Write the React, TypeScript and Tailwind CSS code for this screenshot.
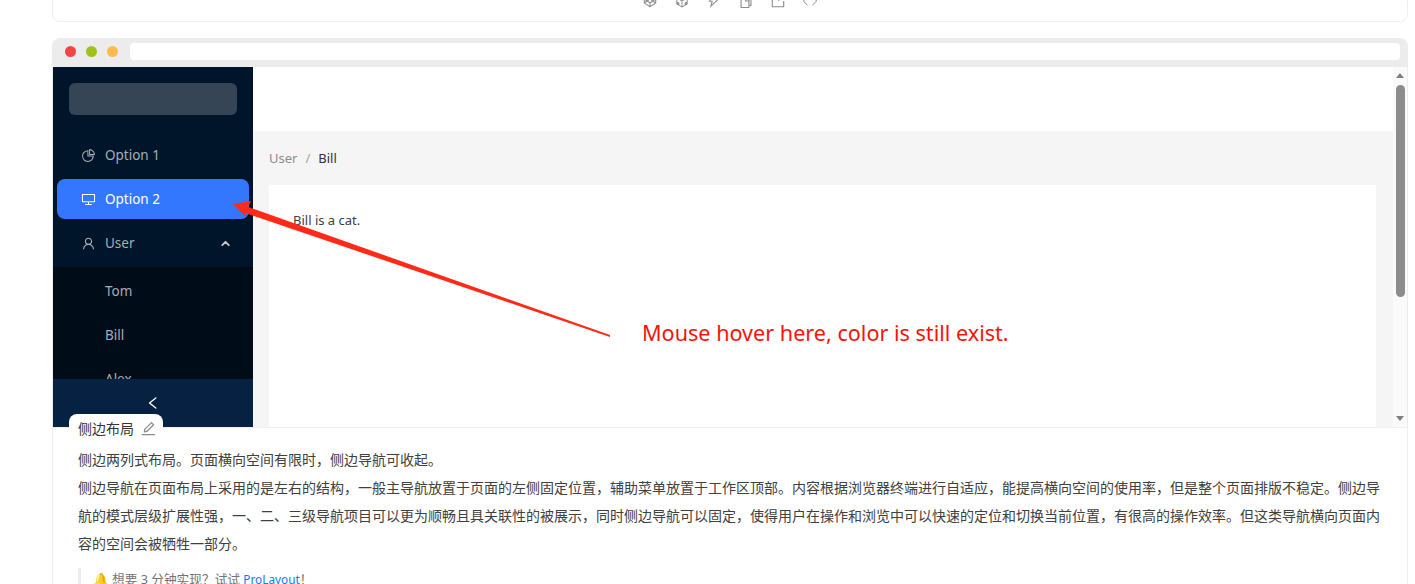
import React from "react";
import {
  AiOutlineCodepen,
  AiOutlineCodeSandbox,
  AiOutlineThunderbolt,
  AiOutlineSnippets,
  AiOutlineExport,
  AiOutlinePieChart,
  AiOutlineDesktop,
  AiOutlineUser,
  AiOutlineLeft,
  AiOutlineEdit,
} from "react-icons/ai";
import { Code, ChevronUp } from "lucide-react";

const cjk = "font-['Noto_Sans','Noto_Sans_CJK_SC',sans-serif]";

function SideItem({ icon, label, active }: { icon: React.ReactNode; label: string; active?: boolean }) {
  return (
    <div
      className={`mx-1 flex h-10 items-center gap-[9px] rounded-lg pl-6 text-[13.5px] ${
        active ? "bg-[#3377ff] text-white" : "text-[#a6adb4]"
      }`}
    >
      {icon}
      <span>{label}</span>
    </div>
  );
}

function SubItem({ label }: { label: string }) {
  return <div className="flex h-10 items-center pl-[52px]">{label}</div>;
}

export default function App() {
  return (
    <div className={`relative h-[584px] w-[1415px] overflow-hidden bg-white pl-[52px] pr-[7px] ${cjk}`}>
      {/* card above, scrolled out of view */}
      <div className="flex h-[22px] justify-center rounded-b-lg border border-t-0 border-[#f0f0f0]">
        <div className="flex h-[9px] items-end gap-[16px] text-[#8c8c8c]">
          <AiOutlineCodepen size={16} />
          <AiOutlineCodeSandbox size={16} />
          <AiOutlineThunderbolt size={16} />
          <AiOutlineSnippets size={16} />
          <AiOutlineExport size={16} />
          <Code size={16} strokeWidth={1.5} />
        </div>
      </div>

      {/* browser frame */}
      <div className="mt-4 rounded-t-lg border-x border-[#ececec]">
        <div className="flex h-[29px] items-center rounded-t-lg bg-[#ececec] pl-3 pb-[2px]">
          <span className="h-[11px] w-[11px] rounded-full bg-[#f44444]" />
          <span className="ml-[10px] h-[11px] w-[11px] rounded-full bg-[#a0c11c]" />
          <span className="ml-[10px] h-[11px] w-[11px] rounded-full bg-[#fdbb4e]" />
          <div className="ml-3 mr-[7px] h-[17px] flex-1 rounded-sm bg-white" />
        </div>

        <div className="flex h-[360px]">
          <aside className="flex w-[200px] flex-col bg-[#001529]">
            <div className="mx-4 mt-4 h-8 rounded-md bg-[#364555]" />
            <div className="mt-5 flex h-[244px] flex-col overflow-hidden">
              <SideItem icon={<AiOutlinePieChart size={15} />} label="Option 1" />
              <div className="mt-1">
                <SideItem active icon={<AiOutlineDesktop size={15} />} label="Option 2" />
              </div>
              <div className="mt-1 flex h-10 items-center gap-[9px] pl-7 pr-[21px] text-[13.5px] text-[#a6adb4]">
                <AiOutlineUser size={15} />
                <span className="flex-1">User</span>
                <ChevronUp size={13} strokeWidth={3.5} className="text-[#c4c8cc]" />
              </div>
              <div className="mt-1 flex-1 overflow-hidden bg-[#000c17] pt-1 text-[13.5px] text-[#a6adb4]">
                <SubItem label="Tom" />
                <div className="mt-1">
                  <SubItem label="Bill" />
                </div>
                <div className="mt-1">
                  <SubItem label="Alex" />
                </div>
              </div>
            </div>
            <div className="flex h-12 items-center justify-center bg-[#062142] text-white">
              <AiOutlineLeft size={16} />
            </div>
          </aside>

          <main className="flex flex-1 flex-col">
            <div className="h-16 bg-white" />
            <div className="flex flex-1 flex-col bg-[#f5f5f5] pl-4 pr-[17px]">
              <div className="flex h-[54px] items-center pt-[2px] text-[13px]">
                <span className="text-[#8c8c8c]">User</span>
                <span className="mx-2 text-[#a6a6a6]">/</span>
                <span className="text-[#333333]">Bill</span>
              </div>
              <div className="flex-1 bg-white p-6 text-[13px] leading-[22px] text-[#404040]">Bill is a cat.</div>
            </div>
          </main>

          <div className="flex w-[14px] flex-col items-center bg-[#fafafa]">
            <div className="mt-[6px] h-0 w-0 border-x-[4.5px] border-b-[5px] border-x-transparent border-b-[#7f7f7f]" />
            <div className="mt-[7px] h-[212px] w-[9px] rounded-full bg-[#8c8c8c]" />
            <div className="mt-auto mb-[6px] h-0 w-0 border-x-[4.5px] border-t-[5px] border-x-transparent border-t-[#7f7f7f]" />
          </div>
        </div>
      </div>

      {/* description below the demo */}
      <div className="relative h-[160px] border border-b-0 border-[#f0f0f0] pl-[25px] pr-[24px] text-[14px] text-[#404040]">
        <div className="-mt-[14px] ml-[-9px] flex h-[28px] w-[94px] items-center gap-[6px] rounded-t-lg bg-white pl-[9px] text-[#333333]">
          <span>侧边布局</span>
          <AiOutlineEdit size={17} className="text-[#8c8c8c]" />
        </div>
        <div className="mt-[4px] leading-[28px]">
          <p>侧边两列式布局。页面横向空间有限时，侧边导航可收起。</p>
          <p>
            侧边导航在页面布局上采用的是左右的结构，一般主导航放置于页面的左侧固定位置，辅助菜单放置于工作区顶部。内容根据浏览器终端进行自适应，能提高横向空间的使用率，但是整个页面排版不稳定。侧边导航的模式层级扩展性强，一、二、三级导航项目可以更为顺畅且具关联性的被展示，同时侧边导航可以固定，使得用户在操作和浏览中可以快速的定位和切换当前位置，有很高的操作效率。但这类导航横向页面内容的空间会被牺牲一部分。
          </p>
        </div>
        <div className="mt-[10px] flex items-center gap-[3px] border-l-[3px] border-[#ededed] pl-3 text-[12.7px] leading-[22px] text-[#737373]">
          <span>🔔</span>
          <span>
            想要 3 分钟实现？试试 <span className="text-[11.8px] text-[#1677ff]">ProLayout</span>！
          </span>
        </div>
      </div>

      {/* annotation drawn on top of the screenshot */}
      <svg className="absolute left-0 top-0" width="1415" height="584" fill="none">
        <polygon points="233,204 251,201 248,207 610,335 610,337 245,213 246,217" fill="#ff2a17" />
      </svg>
      <div className="absolute left-[642px] top-[318px] text-[21.6px] leading-[30px] text-[#f5140a]">
        Mouse hover here, color is still exist.
      </div>
    </div>
  );
}
